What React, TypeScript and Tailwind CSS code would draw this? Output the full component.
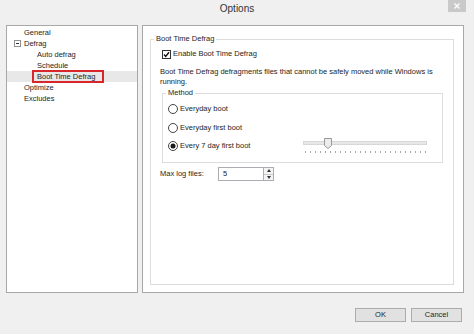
import React from "react";

function Check() {
  return (
    <svg width="9" height="9" viewBox="0 0 9 9" className="shrink-0">
      <rect x="0.5" y="0.5" width="8" height="8" fill="#fff" stroke="#333" />
      <path d="M2 4.6 L3.7 6.4 L7 2.2" fill="none" stroke="#111" strokeWidth="1.4" />
    </svg>
  );
}

function Radio({ on }: { on?: boolean }) {
  return (
    <svg width="10" height="10" viewBox="0 0 10 10" className="shrink-0">
      <circle cx="5" cy="5" r="4.5" fill="#fff" stroke="#444" />
      {on && <circle cx="5" cy="5" r="2.5" fill="#1a1a1a" />}
    </svg>
  );
}

function Slider() {
  const ticks = Array.from({ length: 25 }, (_, i) => 2 + i * 5);
  return (
    <svg width="124" height="16" viewBox="0 0 124 16" className="-mt-[3px] mr-[15px] overflow-visible">
      <rect x="0.5" y="3.5" width="123" height="3" fill="#e7e7e7" stroke="#d8d8d8" />
      {ticks.map((t) => (
        <rect key={t} x={t} y="13" width="1" height="2" fill="#a8a8a8" />
      ))}
      <path d="M21.5 0.5 H28.5 V7.5 L25 10.5 L21.5 7.5 Z" fill="#ececec" stroke="#9a9a9a" />
    </svg>
  );
}

export default function App() {
  return (
    <div className="w-[474px] h-[334px] bg-[#f0f0f0] flex flex-col font-['Liberation_Sans',Arial,sans-serif] text-[7.5px] leading-[10px] text-[#1e1e1e]">
      <div className="h-[25px] grid grid-cols-[1fr_auto_1fr] items-start">
        <div />
        <div className="text-[10px] leading-[18px] text-[#333]">Options</div>
        <div className="flex justify-end pr-[8px]">
          <div className="w-[18px] h-[12px] bg-[#c9c9c9] flex items-center justify-center">
            <svg width="6" height="6" viewBox="0 0 6 6">
              <path d="M0.5 0.5 L5.5 5.5 M5.5 0.5 L0.5 5.5" stroke="#fff" strokeWidth="1.3" />
            </svg>
          </div>
        </div>
      </div>

      <div className="flex gap-[4px] pl-[6px] pr-[10px] h-[268px]">
        <div className="w-[132px] border border-[#a8a8a8] bg-white pt-[1px]">
          <div className="h-[11px] flex items-center pl-[17px]">General</div>
          <div className="h-[11px] flex items-center pl-[7px] gap-[3px]">
            <div className="w-[7px] h-[7px] border border-[#919191] flex items-center justify-center">
              <div className="w-[3px] h-[1px] bg-[#333]" />
            </div>
            <span>Defrag</span>
          </div>
          <div className="h-[11px] flex items-center pl-[30px]">Auto defrag</div>
          <div className="h-[11px] flex items-center pl-[30px]">Schedule</div>
          <div className="h-[11px] flex items-center pl-[25px] bg-[#e8e8e8]">
            <span className="inline-block h-[13px] leading-[9px] border-2 border-[#d9262b] pl-[3px] pr-[7px] whitespace-nowrap">
              Boot Time Defrag
            </span>
          </div>
          <div className="h-[11px] flex items-center pl-[17px]">Optimize</div>
          <div className="h-[11px] flex items-center pl-[17px]">Excludes</div>
        </div>

        <div className="flex-1 border border-[#a8a8a8] bg-white pt-[8px] pl-[7px] pr-[9px] pb-[7px] flex flex-col">
          <fieldset className="flex-1 border border-[#dcdcdc] min-w-0">
            <legend className="ml-[3px] px-[2px] leading-[10px]">Boot Time Defrag</legend>
            <div className="pl-[9px]">
              <div className="mt-[5px] h-[10px] flex items-center gap-[2px] pl-[2px]">
                <Check />
                <span>Enable Boot Time Defrag</span>
              </div>
              <div className="mt-[8px] whitespace-nowrap">
                <div>Boot Time Defrag defragments files that cannot be safely moved while Windows is</div>
                <div>running.</div>
              </div>
              <fieldset className="mt-[1px] ml-[2px] mr-[10px] border border-[#dcdcdc] min-w-0">
                <legend className="ml-[3px] px-[2px] leading-[10px]">Method</legend>
                <div className="pl-[5px] pb-[11px]">
                  <div className="mt-[6px] h-[10px] flex items-center gap-[2px]">
                    <Radio />
                    <span>Everyday boot</span>
                  </div>
                  <div className="mt-[9px] h-[10px] flex items-center gap-[2px]">
                    <Radio />
                    <span>Everyday first boot</span>
                  </div>
                  <div className="mt-[8px] h-[10px] flex items-start justify-between">
                    <div className="h-[10px] flex items-center gap-[2px]">
                      <Radio on />
                      <span>Every 7 day first boot</span>
                    </div>
                    <Slider />
                  </div>
                </div>
              </fieldset>
              <div className="mt-[4px] h-[14px] flex items-center">
                <span className="w-[58px]">Max log files:</span>
                <div className="w-[46px] h-[14px] border border-[#abadb3] bg-white pl-[4px] flex items-center">5</div>
                <div className="w-[10px] h-[14px] border border-l-0 border-[#abadb3] bg-[#f4f4f4] flex flex-col">
                  <div className="flex-1 flex items-center justify-center border-b border-[#c8c8c8]">
                    <svg width="4" height="3" viewBox="0 0 4 3"><path d="M0 3 L2 0 L4 3 Z" fill="#333" /></svg>
                  </div>
                  <div className="flex-1 flex items-center justify-center">
                    <svg width="4" height="3" viewBox="0 0 4 3"><path d="M0 0 L2 3 L4 0 Z" fill="#333" /></svg>
                  </div>
                </div>
              </div>
            </div>
          </fieldset>
        </div>
      </div>

      <div className="mt-[15px] flex justify-end gap-[5px] pr-[12px]">
        <div className="w-[51px] h-[14px] leading-[12px] border border-[#acacac] bg-[#e1e1e1] text-center">OK</div>
        <div className="w-[51px] h-[14px] leading-[12px] border border-[#acacac] bg-[#e1e1e1] text-center">Cancel</div>
      </div>
    </div>
  );
}
